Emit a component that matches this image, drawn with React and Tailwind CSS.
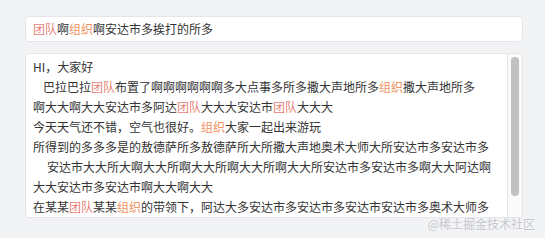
import React from "react";

const Team = () => <span className="text-[#e77f76]">团队</span>;
const Org = () => <span className="text-[#f0935f]">组织</span>;

const Line = ({ indent, children }) => (
    <div className="h-[20px] leading-[20px] whitespace-nowrap">
        {indent ? <span className={indent} /> : null}
        {children}
    </div>
);

export default function App() {
    return (
        <div
            className="relative h-[238px] bg-[#f2f3f5] pt-[16px] pl-[25px] text-[12px] text-[#333]"
            style={{ fontFamily: '"Noto Sans CJK SC", "Noto Sans", sans-serif' }}
        >
            <div className="flex h-[26px] w-[498px] items-center rounded-[4px] border border-[#e4e6ea] bg-white px-[7px]">
                <Team />啊<Org />啊安达市多挨打的所多
            </div>

            <div className="mt-[11px] flex h-[165px] w-[498px] overflow-hidden rounded-[4px] border border-[#e4e6ea] bg-white">
                <div className="flex-1 overflow-hidden pl-[7px] pt-[3px]">
                    <Line>HI，大家好</Line>
                    <Line indent="inline-block w-[10px]">
                        巴拉巴拉<Team />布置了啊啊啊啊啊啊多大点事多所多撒大声地所多<Org />撒大声地所多
                    </Line>
                    <Line>
                        啊大大啊大大安达市多阿达<Team />大大大安达市<Team />大大大
                    </Line>
                    <Line>
                        今天天气还不错，空气也很好。<Org />大家一起出来游玩
                    </Line>
                    <Line>所得到的多多多是的敖德萨所多敖德萨所大所撒大声地奥术大师大所安达市多安达市多</Line>
                    <Line indent="inline-block w-[14px]">
                        安达市大大所大啊大大所啊大大所啊大大所啊大大所安达市多安达市多啊大大阿达啊
                    </Line>
                    <Line>大大安达市多安达市啊大大啊大大</Line>
                    <Line>
                        在某某<Team />某某<Org />的带领下，阿达大多安达市多安达市多安达市安达市多奥术大师多
                    </Line>
                </div>
                <div className="w-[15px] border-l border-[#e6e6e6] bg-[#fafafa] px-[3px] pt-[3px]">
                    <div className="h-[139px] rounded-full bg-[#c1c1c1]" />
                </div>
            </div>

            <div className="absolute right-[10px] bottom-[8px] text-[12px] leading-none text-[#c4c6ca] [text-shadow:0_0_2px_#fff]">
                @稀土掘金技术社区
            </div>
        </div>
    );
}
